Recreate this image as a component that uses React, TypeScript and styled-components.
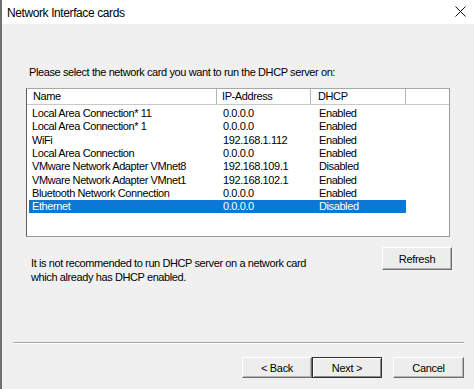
import React from "react";
import styled, { createGlobalStyle } from "styled-components";

const Global = createGlobalStyle`
  html, body { margin: 0; padding: 0; background: #f0f0f0; }
  body { font-family: "Liberation Sans", Arial, sans-serif; font-size: 11px; letter-spacing: -0.4px; color: #000; }
`;

const Window = styled.div`
  width: 474px;
  height: 389px;
  box-sizing: border-box;
  border-left: 2px solid #707070;
  display: flex;
  flex-direction: column;
  background: #f0f0f0;
  overflow: hidden;
`;

const TitleBar = styled.div`
  height: 24px;
  flex: none;
  background: #ffffff;
  display: flex;
  align-items: center;
  justify-content: space-between;
  padding: 0 8px 0 5px;
`;

const Title = styled.span`
  font-family: "Liberation Sans", Arial, sans-serif;
  font-size: 12px;
  letter-spacing: -0.4px;
  color: #000;
  padding-top: 1px;
`;

const CloseIcon = styled.svg`
  width: 11px;
  height: 11px;
  margin-top: -1px;
`;

const Content = styled.div`
  padding: 41px 24px 0 24px;
  display: flex;
  flex-direction: column;
`;

const Prompt = styled.div`
  line-height: 14px;
  margin-left: 3px;
`;

const ListBox = styled.div`
  margin-top: 9px;
  height: 149px;
  box-sizing: border-box;
  background: #ffffff;
  border: 1px solid #9a9a9a;
  border-left-color: #5f5f5f;
  display: flex;
  flex-direction: column;
`;

const Header = styled.div`
  display: grid;
  grid-template-columns: 190px 94px 95px 1fr;
  height: 15px;
  border-bottom: 1px solid #c8c8c8;
  border-top: 1px solid #a8a8a8;
  margin-top: -1px;
`;

const HeaderCell = styled.div<{ $pad: number; $last?: boolean }>`
  line-height: 15px;
  padding-left: ${(p) => p.$pad}px;
  border-right: ${(p) => (p.$last ? "none" : "1px solid #b4b4b4")};
  white-space: nowrap;
`;

const Rows = styled.div`
  padding: 2px 0 0 2px;
  display: flex;
  flex-direction: column;
`;

const Row = styled.div<{ $selected?: boolean }>`
  width: 377px;
  height: 13.3px;
  box-sizing: border-box;
  padding-left: 3px;
  display: grid;
  grid-template-columns: 191px 96px 87px;
  align-items: center;
  line-height: 13px;
  background: ${(p) => (p.$selected ? "#0a78d4" : "transparent")};
  color: ${(p) => (p.$selected ? "#ffffff" : "#000000")};
  white-space: nowrap;
`;

const Cell = styled.span``;

const InfoRow = styled.div`
  margin-top: 10px;
  display: flex;
  justify-content: space-between;
  align-items: flex-start;
`;

const Note = styled.div`
  margin-left: 5px;
  margin-top: 9px;
  line-height: 14px;
`;

const Button = styled.button<{ $default?: boolean; $h?: number }>`
  font-family: "Liberation Sans", Arial, sans-serif;
  font-size: 11px;
  letter-spacing: -0.3px;
  color: #000;
  width: 70px;
  height: ${(p) => p.$h ?? 21}px;
  box-sizing: border-box;
  background: #ededed;
  padding: 0;
  border-style: solid;
  border-width: 1px;
  border-color: ${(p) =>
    p.$default ? "#303030" : "#ffffff #6e6e6e #6e6e6e #ffffff"};
  box-shadow: ${(p) =>
    p.$default
      ? "inset 1px 1px 0 #ffffff, inset -1px -1px 0 #8a8a8a"
      : "inset -1px -1px 0 #b4b4b4"};
  cursor: default;
`;

const RefreshButton = styled(Button)`
  margin-right: -2px;
`;

const Spacer = styled.div`
  flex: 1;
`;

const Footer = styled.div`
  padding: 0 10px 11px 11px;
  display: flex;
  flex-direction: column;
`;

const Separator = styled.div`
  height: 1px;
  background: #a8a8a8;
  border-bottom: 1px solid #ffffff;
  margin-bottom: 13px;
`;

const ButtonRow = styled.div`
  display: flex;
  justify-content: flex-end;
  align-items: center;
`;

const CancelButton = styled(Button)`
  width: 71px;
  margin-left: 11px;
`;

const NextButton = styled(Button)`
  margin-left: 0;
`;

type Card = { name: string; ip: string; dhcp: string; selected?: boolean };

const cards: Card[] = [
  { name: "Local Area Connection* 11", ip: "0.0.0.0", dhcp: "Enabled" },
  { name: "Local Area Connection* 1", ip: "0.0.0.0", dhcp: "Enabled" },
  { name: "WiFi", ip: "192.168.1.112", dhcp: "Enabled" },
  { name: "Local Area Connection", ip: "0.0.0.0", dhcp: "Enabled" },
  { name: "VMware Network Adapter VMnet8", ip: "192.168.109.1", dhcp: "Disabled" },
  { name: "VMware Network Adapter VMnet1", ip: "192.168.102.1", dhcp: "Enabled" },
  { name: "Bluetooth Network Connection", ip: "0.0.0.0", dhcp: "Enabled" },
  { name: "Ethernet", ip: "0.0.0.0", dhcp: "Disabled", selected: true },
];

export default function App() {
  return (
    <>
      <Global />
      <Window>
        <TitleBar>
          <Title>Network Interface cards</Title>
          <CloseIcon viewBox="0 0 11 11">
            <path d="M0.5 0.5 L10.5 10.5 M10.5 0.5 L0.5 10.5" stroke="#111" strokeWidth="1" fill="none" />
          </CloseIcon>
        </TitleBar>
        <Content>
          <Prompt>Please select the network card you want to run the DHCP server on:</Prompt>
          <ListBox>
            <Header>
              <HeaderCell $pad={6}>Name</HeaderCell>
              <HeaderCell $pad={5}>IP-Address</HeaderCell>
              <HeaderCell $pad={7}>DHCP</HeaderCell>
              <HeaderCell $pad={0} $last />
            </Header>
            <Rows>
              {cards.map((c) => (
                <Row key={c.name} $selected={c.selected}>
                  <Cell>{c.name}</Cell>
                  <Cell>{c.ip}</Cell>
                  <Cell>{c.dhcp}</Cell>
                </Row>
              ))}
            </Rows>
          </ListBox>
          <InfoRow>
            <Note>
              It is not recommended to run DHCP server on a network card
              <br />
              which already has DHCP enabled.
            </Note>
            <RefreshButton $h={23}>Refresh</RefreshButton>
          </InfoRow>
        </Content>
        <Spacer />
        <Footer>
          <Separator />
          <ButtonRow>
            <Button>&lt; Back</Button>
            <NextButton $default>Next &gt;</NextButton>
            <CancelButton>Cancel</CancelButton>
          </ButtonRow>
        </Footer>
      </Window>
    </>
  );
}
